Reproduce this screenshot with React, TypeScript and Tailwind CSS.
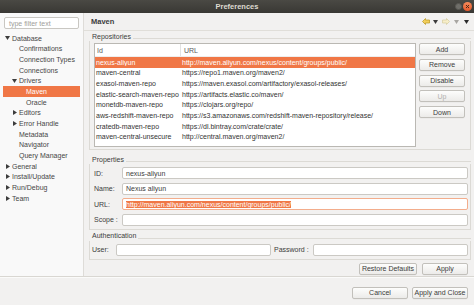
import React from "react";

type TreeItem = { label: string; indent: number; arrow?: "down" | "right"; selected?: boolean };

const tree: TreeItem[] = [
  { label: "Database", indent: 0, arrow: "down" },
  { label: "Confirmations", indent: 1 },
  { label: "Connection Types", indent: 1 },
  { label: "Connections", indent: 1 },
  { label: "Drivers", indent: 1, arrow: "down" },
  { label: "Maven", indent: 2, selected: true },
  { label: "Oracle", indent: 2 },
  { label: "Editors", indent: 1, arrow: "right" },
  { label: "Error Handle", indent: 1, arrow: "right" },
  { label: "Metadata", indent: 1 },
  { label: "Navigator", indent: 1 },
  { label: "Query Manager", indent: 1 },
  { label: "General", indent: 0, arrow: "right" },
  { label: "Install/Update", indent: 0, arrow: "right" },
  { label: "Run/Debug", indent: 0, arrow: "right" },
  { label: "Team", indent: 0, arrow: "right" },
];

const repos: [string, string][] = [
  ["nexus-aliyun", "http://maven.aliyun.com/nexus/content/groups/public/"],
  ["maven-central", "https://repo1.maven.org/maven2/"],
  ["exasol-maven-repo", "https://maven.exasol.com/artifactory/exasol-releases/"],
  ["elastic-search-maven-repo", "https://artifacts.elastic.co/maven/"],
  ["monetdb-maven-repo", "https://clojars.org/repo/"],
  ["aws-redshift-maven-repo", "https://s3.amazonaws.com/redshift-maven-repository/release/"],
  ["cratedb-maven-repo", "https://dl.bintray.com/crate/crate/"],
  ["maven-central-unsecure", "http://central.maven.org/maven2/"],
];

const indentPad = ["pl-0", "pl-[7px]", "pl-[14px]"];

function DownTri({ color = "#3c3c3c" }: { color?: string }) {
  return (
    <svg width="5" height="4" viewBox="0 0 5 4">
      <path d="M0 0H5L2.5 4Z" fill={color} />
    </svg>
  );
}
function RightTri() {
  return (
    <svg width="4" height="5" viewBox="0 0 4 5">
      <path d="M0 0L4 2.5L0 5Z" fill="#3c3c3c" />
    </svg>
  );
}

function Btn({ children, className = "", disabled = false }: { children: React.ReactNode; className?: string; disabled?: boolean }) {
  return (
    <div
      className={
        "h-[12px] flex items-center justify-center rounded-[2px] border border-[#c2c0bb] bg-gradient-to-b from-[#fdfdfc] to-[#ecebe9] shadow-[0_0.5px_0_rgba(0,0,0,0.05)] leading-none " +
        (disabled ? "text-[#b3b1ad] " : "text-[#3c3c3c] ") +
        className
      }
    >
      {children}
    </div>
  );
}

function Input({ children, className = "" }: { children?: React.ReactNode; className?: string }) {
  return (
    <div className={"h-[12px] flex items-center pl-[3px] rounded-[2px] border border-[#cbc9c4] bg-white text-[#3c3c3c] leading-none overflow-hidden whitespace-nowrap " + className}>
      {children}
    </div>
  );
}

function GroupHeader({ label }: { label: string }) {
  return (
    <div className="h-[10px] flex items-center">
      <span className="pl-[3px] pr-[2px] text-[#3c3c3c] leading-none">{label}</span>
      <div className="flex-1 h-px bg-[#dcdad5] mt-[5px]" />
    </div>
  );
}

export default function App() {
  return (
    <div className="w-[474px] h-[305px] overflow-hidden flex flex-col bg-[#f2f1f0] text-[7px] font-['Liberation_Sans',Arial,sans-serif] text-[#3c3c3c]">
      {/* title bar */}
      <div className="h-[13px] shrink-0 grid grid-cols-[1fr_auto_1fr] items-center bg-gradient-to-b from-[#4a4944] to-[#393834]">
        <div />
        <div className="text-[#dfdbd2] font-bold text-[7.5px] leading-none">Preferences</div>
        <div className="flex justify-end items-center gap-[1px] pr-[2px]">
          <div className="w-[7px] h-[7px] rounded-full bg-[#6f6e69] border border-[#5a5954]" />
          <div className="w-[9px] h-[9px] rounded-full bg-gradient-to-b from-[#f58a5a] to-[#e5582a] flex items-center justify-center">
            <svg width="5" height="5" viewBox="0 0 5 5">
              <path d="M1 1L4 4M4 1L1 4" stroke="#4a2a1c" strokeWidth="1" />
            </svg>
          </div>
        </div>
      </div>

      {/* body */}
      <div className="flex flex-1 min-h-0 border-b border-[#d9d7d2]">
        {/* left */}
        <div className="w-[84px] shrink-0 bg-[#f9f9f9] border-r border-[#dedcd8] pt-[4px]">
          <div className="mx-[4px] h-[12px] flex items-center pl-[4px] rounded-[2px] border border-[#c9c7c2] bg-white text-[#a09e9a] leading-none">
            type filter text
          </div>
          <div className="mt-[4px] px-[3px]">
            {tree.map((t) => (
              <div
                key={t.label}
                className={
                  "h-[10.67px] flex items-center leading-none " +
                  (t.selected ? "bg-[#f07746] text-white " : "text-[#464646] ") +
                  indentPad[t.indent]
                }
              >
                <div className="w-[9px] flex items-center justify-center">
                  {t.arrow === "down" && <DownTri />}
                  {t.arrow === "right" && <RightTri />}
                </div>
                <span className="whitespace-nowrap">{t.label}</span>
              </div>
            ))}
          </div>
        </div>

        {/* right */}
        <div className="flex-1 flex flex-col min-w-0">
          <div className="h-[18px] shrink-0 flex items-center justify-between pl-[7px] pr-[5px] border-b border-[#e0ded9]">
            <span className="font-bold text-[7.5px] leading-none text-[#3c3c3c]">Maven</span>
            <div className="flex items-center">
              <svg width="8" height="7" viewBox="0 0 8 7">
                <path d="M0.5 3.5L3.5 0.5V2H7.5V5H3.5V6.5Z" fill="#f3cf5c" stroke="#b8951d" strokeWidth="0.7" />
              </svg>
              <div className="ml-[3px]"><DownTri /></div>
              <svg className="ml-[4px]" width="8" height="7" viewBox="0 0 8 7">
                <path d="M7.5 3.5L4.5 0.5V2H0.5V5H4.5V6.5Z" fill="#f7eec9" stroke="#d6cb9d" strokeWidth="0.7" />
              </svg>
              <div className="ml-[4px]"><DownTri color="#a8a6a2" /></div>
              <div className="ml-[5px]"><DownTri color="#2a2a2a" /></div>
            </div>
          </div>

          <div className="flex-1 flex flex-col pl-[5px] pr-[3px]">
            {/* Repositories */}
            <GroupHeader label="Repositories" />
            <div className="border-x border-b border-[#dcdad5] flex pl-[4px] pr-[5px] pt-[2px] pb-[2px] gap-[3px]">
              <div className="w-[322px] h-[104px] border border-[#bab8b3] bg-white flex flex-col overflow-hidden">
                <div className="h-[13px] shrink-0 flex items-center text-[#5a5a5a] leading-none border-b border-[#eeeeee]">
                  <div className="w-[86px] pl-[2px] h-full flex items-center border-r border-[#e2e2e2]">Id</div>
                  <div className="pl-[3px]">URL</div>
                </div>
                {repos.map(([id, url], i) => (
                  <div
                    key={id}
                    className={
                      "h-[10.67px] shrink-0 flex items-center leading-none whitespace-nowrap " +
                      (i === 0 ? "bg-[#f07746] text-white" : "text-[#333333]")
                    }
                  >
                    <div className="w-[86px] pl-[1px] overflow-hidden">{id}</div>
                    <div className="pl-[1px]">{url}</div>
                  </div>
                ))}
              </div>
              <div className="w-[46px] flex flex-col gap-[3.8px]">
                <Btn>Add</Btn>
                <Btn>Remove</Btn>
                <Btn>Disable</Btn>
                <Btn disabled>Up</Btn>
                <Btn>Down</Btn>
              </div>
            </div>

            {/* Properties */}
            <div className="mt-[4px]">
              <GroupHeader label="Properties" />
            </div>
            <div className="border-x border-b border-[#dcdad5] flex flex-col gap-[3.6px] pl-[4px] pr-[2px] pt-[3px] pb-[3px]">
              <div className="flex items-center">
                <div className="w-[28px] leading-none">ID:</div>
                <Input className="flex-1">nexus-aliyun</Input>
              </div>
              <div className="flex items-center">
                <div className="w-[28px] leading-none">Name:</div>
                <Input className="flex-1">Nexus aliyun</Input>
              </div>
              <div className="flex items-center">
                <div className="w-[28px] leading-none">URL:</div>
                <Input className="flex-1 border-[#f3ad8c] bg-[#fffaf7]">
                  <span className="bg-[#f07746] text-white">http://maven.aliyun.com/nexus/content/groups/public/</span>
                </Input>
              </div>
              <div className="flex items-center">
                <div className="w-[28px] leading-none">Scope :</div>
                <Input className="flex-1" />
              </div>
            </div>

            {/* Authentication */}
            <div className="mt-[1px]">
              <GroupHeader label="Authentication" />
            </div>
            <div className="border-x border-b border-[#dcdad5] flex items-center pl-[2px] pr-[2px] pt-[3px] pb-[3px]">
              <div className="w-[24px] leading-none">User:</div>
              <Input className="flex-1" />
              <div className="w-[42px] pl-[3px] leading-none whitespace-nowrap">Password :</div>
              <Input className="flex-1" />
            </div>

            <div className="flex justify-end gap-[5px] pr-[3px] mt-[3px]">
              <Btn className="w-[58px]">Restore Defaults</Btn>
              <Btn className="w-[46px]">Apply</Btn>
            </div>
          </div>
        </div>
      </div>

      {/* footer */}
      <div className="h-[28px] shrink-0 flex items-center justify-end gap-[4px] pr-[6px] pt-[2px] border-t border-[#fbfbfa]">
        <Btn className="w-[56px]">Cancel</Btn>
        <Btn className="w-[56px]">Apply and Close</Btn>
      </div>
    </div>
  );
}
